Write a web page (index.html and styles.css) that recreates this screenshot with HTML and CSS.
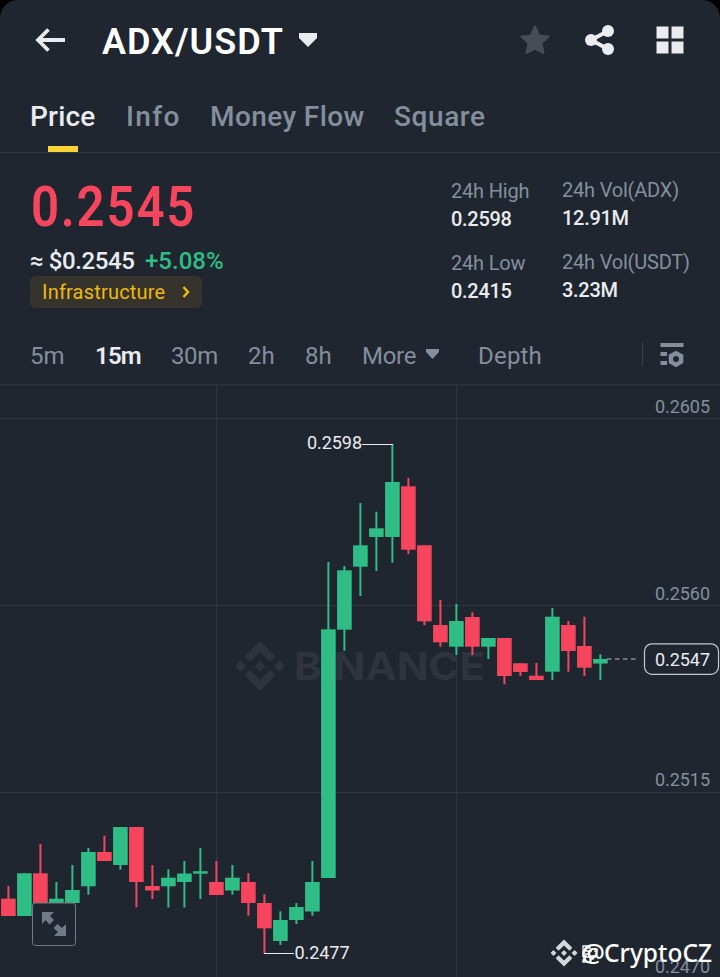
FILE: index.html
```html
<!DOCTYPE html>
<html lang="en">
<head>
    <meta charset="UTF-8">
    <meta name="viewport" content="width=device-width, initial-scale=1.0">
    <title>ADX/USDT</title>
    <link rel="stylesheet" href="styles.css">
</head>
<body>
    <div class="app">
        <header class="header">
            <svg class="back" width="32" height="26" viewBox="0 0 32 26">
                <path d="M14.500 2.500 4 13l10.500 10.500M4 13h27" fill="none" stroke="#eaecef" stroke-width="3.800"/>
            </svg>
            <h1>ADX/USDT</h1>
            <svg class="caret" width="18" height="14" viewBox="0 0 18 14">
                <path d="M0 0h18v5L9 14 0 5z" fill="#eaecef"/>
            </svg>
            <svg class="star" width="32" height="32" viewBox="0 0 32 32">
                <path d="M16 2.500l4 9 9.500 1-7 6.700 2 9.800-8.500-4.500-8.500 4.500 2-9.800-7-6.700 9.500-1z" fill="#474d57" stroke="#474d57" stroke-width="2" stroke-linejoin="round"/>
            </svg>
            <svg class="share" width="30" height="32" viewBox="0 0 30 32">
                <path d="M23 7 6 16l17 9" fill="none" stroke="#eaecef" stroke-width="4"/>
                <circle cx="6" cy="16" r="6" fill="#eaecef"/>
                <circle cx="23" cy="7" r="6" fill="#eaecef"/>
                <circle cx="23" cy="25" r="6" fill="#eaecef"/>
            </svg>
            <svg class="apps" width="28" height="28" viewBox="0 0 28 28">
                <path d="M.5.5h12v12H.5zM15.500.5h12v12h-12zM.5 15.500h12v12H.5zM15.500 15.500h12v12h-12z" fill="#eaecef"/>
            </svg>
        </header>

        <nav class="tabs">
            <a class="tab active">Price</a>
            <a class="tab info">Info</a>
            <a class="tab flow">Money Flow</a>
            <a class="tab square">Square</a>
        </nav>

        <section class="ticker">
            <div class="price-box">
                <div class="price">0.2545</div>
                <div class="sub"><span class="usd">≈ $0.2545</span><span class="change">+5.08%</span></div>
                <div class="tag">
                    <span>Infrastructure</span>
                    <svg width="8" height="12" viewBox="0 0 8 12"><path d="M1.500 1 6 6l-4.500 5" fill="none" stroke="#f0b90b" stroke-width="2.500"/></svg>
                </div>
            </div>
            <div class="stats high-low">
                <div class="label">24h High</div>
                <div class="value">0.2598</div>
                <div class="label">24h Low</div>
                <div class="value">0.2415</div>
            </div>
            <div class="stats volume">
                <div class="label">24h Vol(ADX)</div>
                <div class="value">12.91M</div>
                <div class="label">24h Vol(USDT)</div>
                <div class="value">3.23M</div>
            </div>
        </section>

        <div class="intervals">
            <span class="t5">5m</span>
            <span class="t15 active">15m</span>
            <span class="t30">30m</span>
            <span class="t2">2h</span>
            <span class="t8">8h</span>
            <span class="more">More</span>
            <svg class="more-caret" width="13" height="10" viewBox="0 0 13 10"><path d="M0 0h13v3L6.500 10 0 3z" fill="#848e9c"/></svg>
            <span class="depth">Depth</span>
            <i class="divider"></i>
            <svg class="settings" width="24" height="25" viewBox="0 0 24 25">
                <path d="M.5 0h23v4H.5zM.5 9H7v4H.5zM.5 18H7v4H.5z" fill="#848e9c"/>
                <path fill-rule="evenodd" d="M16 7.800l7.300 4v8.200L16 24.200 8.700 20v-8.200zM16 13a3 3 0 1 0 0 6 3 3 0 0 0 0-6z" fill="#848e9c"/>
            </svg>
        </div>

        <div class="chart">
            <svg width="720" height="593" viewBox="0 384 720 593">
                <defs>
                    <g id="logo">
                        <path d="M0-25 15.500-9.500 10-4 0-14-10-4-15.500-9.500zM0 25 15.500 9.500 10 4 0 14-10 4-15.500 9.500zM-19.500-5.500-14 0-19.500 5.500-25 0zM19.500-5.500 25 0 19.500 5.500 14 0zM0-5.500 5.500 0 0 5.500-5.500 0z"/>
                    </g>
                </defs>
                <path d="M0 384.800h720M0 418.700h720M0 605.500h720M0 792.500h720M216.500 384v593M456.500 384v593" stroke="#2f3642" stroke-width="1.200"/>
                <g fill="#2f333e">
                    <use href="#logo" x="260" y="666"/>
                    <text class="watermark" x="294" y="680" textLength="191" lengthAdjust="spacingAndGlyphs">BINANCE</text>
                </g>
                <g class="axis">
                    <text x="655" y="413" textLength="55">0.2605</text>
                    <text x="655" y="600" textLength="55">0.2560</text>
                    <text x="655" y="786" textLength="55">0.2515</text>
                    <text x="655" y="973" textLength="55">0.2470</text>
                </g>
                <g id="candles"></g>
                <path d="M362 444.500h31M264 953.500h30" stroke="#eaecef"/>
                <g class="mark">
                    <text x="307" y="449" textLength="55">0.2598</text>
                    <text x="294.500" y="959" textLength="55">0.2477</text>
                </g>
                <path d="M607 659h28.500" stroke="#848e9c" stroke-width="1.500" stroke-dasharray="4.500 3.500"/>
                <rect x="644.500" y="643.800" width="74" height="30.500" rx="7.500" fill="#1f2630" stroke="#c3c7cd" stroke-width="1.200"/>
                <text class="mark" x="655" y="666" textLength="55">0.2547</text>
                <rect x="32.500" y="903" width="43" height="42.500" rx="3" fill="#1f2630" stroke="#717a87"/>
                <path d="M42 912h12l-4 4 4 4-4.500 4.500-4-4.500L42 924zM66 936H54l4-4-4.500-4 4-4 4.500 4 4-4z" fill="#717a87"/>
                <g class="credit">
                    <use href="#logo" transform="translate(564 953) scale(.54)"/>
                    <text x="581" y="962" textLength="24" lengthAdjust="spacingAndGlyphs">@</text>
                    <path d="M583 946h7v2h-4v3h3v3h-3v3h4v5h-7v-2h2v-4h-2zM591 949v3M595 948v4M588 956h5v3h-2v4h5M594 955v3" fill="none" stroke="#fff" stroke-width="1.300"/>
                    <text x="604" y="962" textLength="108" lengthAdjust="spacingAndGlyphs">CryptoCZ</text>
                </g>
            </svg>
        </div>
    </div>

    <script>
        // [direction, high, body top, body bottom, low] in chart pixels
        const candles = [
            ['down', 886, 898.7, 916, 916],
            ['up', 873.3, 873.3, 916, 916],
            ['down', 844, 873.3, 903, 903],
            ['up', 882, 898.7, 903, 903],
            ['up', 865, 890, 903, 903],
            ['up', 848, 852, 886.3, 894.7],
            ['down', 835.7, 852, 861, 861],
            ['up', 827, 827, 865, 869.7],
            ['down', 827, 827, 882, 907.3],
            ['down', 865, 886, 890.5, 899],
            ['up', 869.3, 877.7, 886.3, 907.5],
            ['up', 861, 873.5, 882, 907.5],
            ['up', 848, 871.2, 873.7, 899],
            ['down', 861, 882, 895, 895],
            ['up', 865, 877.7, 890.5, 894.7],
            ['down', 873.3, 882, 903, 915.7],
            ['down', 894.3, 903, 928.3, 953.5],
            ['up', 911.3, 920, 941, 945],
            ['up', 903, 907, 920, 924],
            ['up', 861, 882, 911.5, 915.7],
            ['up', 562, 629.3, 878, 878],
            ['up', 566, 570.3, 629.7, 650.7],
            ['up', 503, 545.3, 566.7, 596],
            ['up', 511.7, 528.3, 537, 571],
            ['up', 444, 482, 537, 562.7],
            ['down', 478, 486.3, 549.7, 554],
            ['down', 545.3, 545.3, 621.3, 625.3],
            ['down', 600, 625, 642.3, 646.7],
            ['up', 604, 621, 646.7, 655],
            ['down', 612.3, 617, 646.7, 655],
            ['up', 638, 638, 646.7, 659],
            ['down', 638, 638, 676, 684.3],
            ['down', 663.3, 663.3, 672, 676],
            ['down', 663, 675.7, 680, 680],
            ['up', 608, 616.7, 671.7, 680],
            ['down', 621, 625, 651, 671.7],
            ['down', 616.7, 646, 667.7, 676],
            ['up', 654.3, 659, 663.5, 680]
        ];

        document.getElementById('candles').innerHTML = candles.map(([dir, high, top, bottom, low], i) => {
            const x = 8.4 + i * 16;
            return `<g class="${dir}">
                <rect x="${x - 1}" y="${high}" width="2" height="${low - high}"/>
                <rect x="${x - 7.3}" y="${top}" width="14.600" height="${bottom - top}"/>
            </g>`;
        }).join('');
    </script>
</body>
</html>
```
FILE: styles.css
```css
* {
    box-sizing: border-box;
}
body {
    margin: 0;
    background: #000;
    font-family: Roboto, "Liberation Sans", sans-serif;
    color: #848e9c;
}
.app {
    width: 720px;
    height: 977px;
    overflow: hidden;
    background: #1f2630;
    border-radius: 18px 18px 0 0;
}
svg {
    display: block;
    flex-shrink: 0;
}
.header {
    display: flex;
    align-items: center;
    height: 80px;
    padding: 0 36px 0 34px;
}
.header h1 {
    width: 182px;
    margin: 4px 0 0 36px;
    font-size: 36px;
    font-weight: 600;
    line-height: 44px;
    letter-spacing: 1px;
    color: #fff;
    white-space: nowrap;
}
.caret {
    margin-left: 15px;
}
.star {
    margin-left: auto;
}
.share {
    margin-left: 34px;
}
.apps {
    margin-left: 41px;
}
.tabs {
    display: flex;
    height: 73px;
    padding: 20px 30px 0;
    gap: 30px;
    border-bottom: 1px solid #2f3642;
    font-size: 28px;
    font-weight: 500;
    line-height: 33px;
    white-space: nowrap;
}
.tab {
    letter-spacing: 0.6px;
}
.tab.active {
    display: flex;
    flex-direction: column;
    justify-content: space-between;
    width: 66px;
    letter-spacing: 0.2px;
    color: #eaecef;
}
.tab.active::after {
    content: "";
    width: 30px;
    height: 6px;
    margin-left: 18px;
    background: #fcd535;
}
.info {
    width: 54px;
    letter-spacing: 1.4px;
}
.flow {
    width: 154px;
    letter-spacing: 0.4px;
}
.ticker {
    display: flex;
    height: 170px;
    white-space: nowrap;
}
.price-box {
    width: 451px;
    padding: 21px 0 0 30px;
}
.price {
    padding-left: 1px;
    font-size: 56px;
    font-weight: 600;
    line-height: 66px;
    letter-spacing: 2px;
    color: #f6465d;
    transform: scaleX(0.88);
    transform-origin: left;
}
.sub {
    display: flex;
    margin-top: 6px;
    font-size: 24px;
    font-weight: 500;
    line-height: 30px;
}
.usd {
    width: 115px;
    letter-spacing: -0.4px;
    color: #eaecef;
}
.change {
    color: #2ebd85;
}
.tag {
    display: flex;
    align-items: center;
    justify-content: space-between;
    width: 172px;
    height: 32px;
    padding: 0 12px;
    border-radius: 6px;
    background: #35332c;
    color: #f0b90b;
    font-size: 20px;
    letter-spacing: 0.2px;
}
.stats {
    width: 111px;
    padding-top: 25px;
    font-size: 20px;
    line-height: 26px;
    letter-spacing: -0.2px;
}
.volume {
    padding-top: 24px;
}
.stats .value {
    margin: 2px 0 18px;
    color: #eaecef;
    font-weight: 500;
    letter-spacing: -0.3px;
}
.intervals {
    display: flex;
    align-items: center;
    height: 61px;
    padding: 4px 36px 0 30px;
    font-size: 24px;
    line-height: 30px;
    white-space: nowrap;
}
.intervals .active {
    color: #eaecef;
    font-weight: 600;
    letter-spacing: -0.8px;
}
.t5 {
    width: 65px;
}
.t15 {
    width: 76px;
}
.t30 {
    width: 77px;
    letter-spacing: -0.4px;
}
.t2 {
    width: 57px;
}
.t8 {
    width: 57px;
}
.more {
    width: 64px;
    letter-spacing: -0.3px;
}
.more-caret {
    margin-top: -4px;
}
.depth {
    margin-left: 39px;
    letter-spacing: 0.2px;
}
.divider {
    width: 1px;
    height: 24px;
    margin-top: -4px;
    margin-left: auto;
    margin-right: 17px;
    background: #3a424e;
}
.settings {
    margin-top: -1px;
}
.axis {
    fill: #848e9c;
    font-size: 18px;
}
.mark {
    fill: #eaecef;
    font-size: 18px;
}
.watermark {
    font-family: Inter, sans-serif;
    font-size: 38px;
    font-weight: 700;
}
.up {
    fill: #2ebd85;
}
.down {
    fill: #f6465d;
}
.credit {
    fill: #fff;
    font-family: "Noto Sans", sans-serif;
    font-size: 25px;
    font-weight: 500;
}
.credit use {
    fill: #d5d6d8;
}
```
